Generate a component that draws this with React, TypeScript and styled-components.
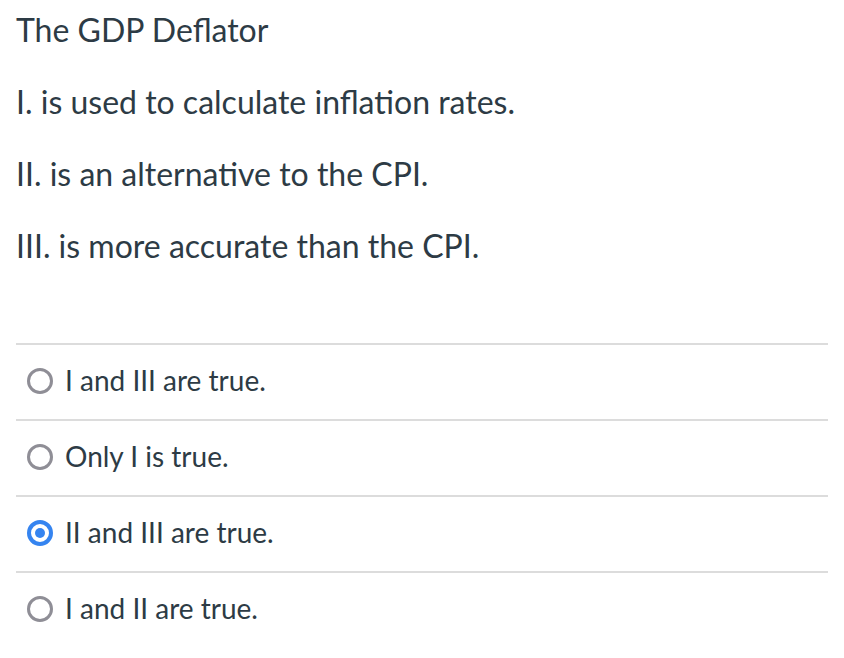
import React from 'react';
import styled, {createGlobalStyle} from 'styled-components';

const GlobalStyle = createGlobalStyle`
    body {
        margin: 0;
        background: #fff;
        font-family: Lato, "Noto Sans", sans-serif;
        color: #2d3b45;
    }
`;

const Page = styled.div`
    padding: 12px 16px 0 16px;
`;

const Statement = styled.p`
    margin: 0 0 36px 0;
    font-size: 32px;
    line-height: 36px;
`;

const Answers = styled.div`
    margin-top: 79px;
`;

const AnswerRow = styled.label`
    display: flex;
    align-items: center;
    box-sizing: border-box;
    height: 76px;
    padding-bottom: 4px;
    border-top: 2px solid #dcdcdc;
    font-size: 28px;
    cursor: pointer;
`;

const Radio = styled.span<{checked?: boolean}>`
    box-sizing: border-box;
    width: 26px;
    height: 26px;
    margin: 2px 12px 0 11px;
    border-radius: 50%;
    border: ${p => p.checked ? '4px solid #3584f0' : '3.5px solid #8f8e96'};
    display: flex;
    align-items: center;
    justify-content: center;

    &::after {
        content: '';
        display: ${p => p.checked ? 'block' : 'none'};
        width: 10px;
        height: 10px;
        border-radius: 50%;
        background: #3584f0;
    }
`;

const statements = [
    'I. is used to calculate inflation rates.',
    'II. is an alternative to the CPI.',
    'III. is more accurate than the CPI.',
];

const answers = [
    {text: 'I and III are true.', checked: false},
    {text: 'Only I is true.', checked: false},
    {text: 'II and III are true.', checked: true},
    {text: 'I and II are true.', checked: false},
];

const App = () => {
    return (
        <Page>
            <GlobalStyle />
            <Statement>The GDP Deflator</Statement>
            {statements.map(s => <Statement key={s}>{s}</Statement>)}
            <Answers>
                {answers.map(a => (
                    <AnswerRow key={a.text}>
                        <Radio checked={a.checked} />
                        {a.text}
                    </AnswerRow>
                ))}
            </Answers>
        </Page>
    );
};

export default App;
